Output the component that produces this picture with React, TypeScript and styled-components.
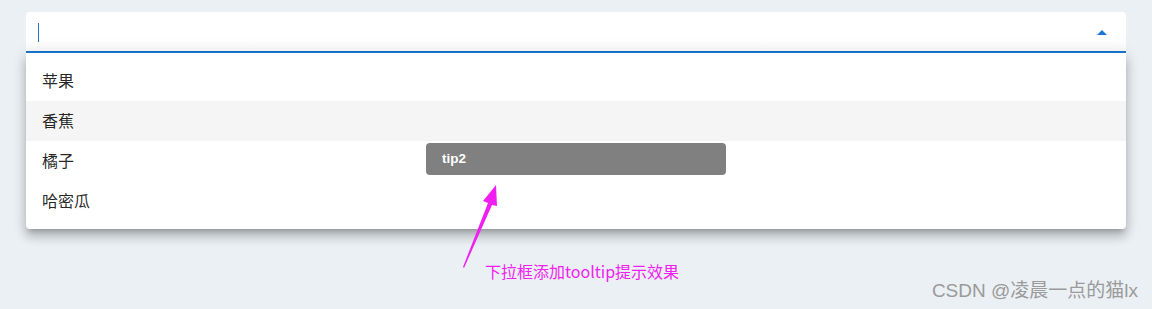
import React from "react"
import styled, { createGlobalStyle } from "styled-components"

const GlobalStyle = createGlobalStyle`
  html, body {
    margin: 0;
    padding: 0;
    background: #ebf0f5;
    font-family: "Microsoft YaHei", "Noto Sans CJK SC", "Liberation Sans", sans-serif;
  }
`

const fruits = ["苹果", "香蕉", "橘子", "哈密瓜"]

const App = () => {
  return (
    <Page>
      <GlobalStyle />
      <SelectWrap>
        <Field>
          <Caret />
          <Arrow viewBox="0 0 10 5">
            <path d="M0 5 L5 0 L10 5 Z" fill="#1976d2" />
          </Arrow>
        </Field>
        <Menu>
          {fruits.map((f, i) => (
            <Item key={f} active={i === 1}>
              {f}
            </Item>
          ))}
        </Menu>
        <Tooltip>tip2</Tooltip>
        <Pointer width="60" height="100" viewBox="0 0 60 100">
          <path d="M4 86 L29 22 L24 20 L37 4 L38 25 L33 24 L5 87 Z" fill="#f01ef0" />
        </Pointer>
      </SelectWrap>
      <Footer>
        <Note>下拉框添加tooltip提示效果</Note>
        <Watermark>CSDN @凌晨一点的猫lx</Watermark>
      </Footer>
    </Page>
  )
}

export default App

const Page = styled.div`
  width: 1152px;
  height: 309px;
  padding: 12px 26px 0 26px;
  box-sizing: border-box;
  overflow: hidden;
  display: flex;
  flex-direction: column;
`

const SelectWrap = styled.div`
  position: relative;
  width: 1100px;
`

const Field = styled.div`
  height: 39px;
  display: flex;
  align-items: center;
  justify-content: space-between;
  padding: 0 19px 0 12px;
  background: linear-gradient(#ffffff 60%, #fafafa);
  border-top-left-radius: 4px;
  border-top-right-radius: 4px;
  border-bottom: 2px solid #1976d2;
`

const Caret = styled.span`
  display: block;
  width: 1px;
  height: 19px;
  background: #1976d2;
  margin-top: 2px;
`

const Arrow = styled.svg`
  width: 10px;
  height: 5px;
  margin-top: 2px;
`

const Menu = styled.div`
  background: #ffffff;
  padding: 8px 0;
  border-radius: 0 0 4px 4px;
  box-shadow: 0 5px 5px -3px rgba(0, 0, 0, 0.2), 0 8px 10px 1px rgba(0, 0, 0, 0.14),
    0 3px 14px 2px rgba(0, 0, 0, 0.12);
`

const Item = styled.div<{ active?: boolean }>`
  height: 40px;
  box-sizing: border-box;
  display: flex;
  align-items: center;
  padding: 0 16px 3px;
  font-size: 16px;
  color: rgba(0, 0, 0, 0.87);
  background: ${(p) => (p.active ? "#f5f5f5" : "transparent")};
`

const Tooltip = styled.div`
  position: absolute;
  left: 400px;
  top: 131px;
  width: 300px;
  height: 32px;
  box-sizing: border-box;
  padding: 0 16px 1px;
  display: flex;
  align-items: center;
  background: #808080;
  border-radius: 4px;
  color: #ffffff;
  font-family: "Liberation Sans", sans-serif;
  font-size: 13.5px;
  font-weight: 700;
`

const Pointer = styled.svg`
  position: absolute;
  left: 433px;
  top: 169px;
`

const Footer = styled.div`
  flex: 1;
  display: flex;
  align-items: flex-start;
  padding: 30px 0 0 459px;
  margin-right: -12px;
`

const Note = styled.div`
  font-size: 16px;
  color: #f01ef0;
`

const Watermark = styled.div`
  margin: 16px 0 0 auto;
  font-size: 19px;
  color: #9a9a9a;
  font-family: "Liberation Sans", "Noto Sans CJK SC", sans-serif;
`
